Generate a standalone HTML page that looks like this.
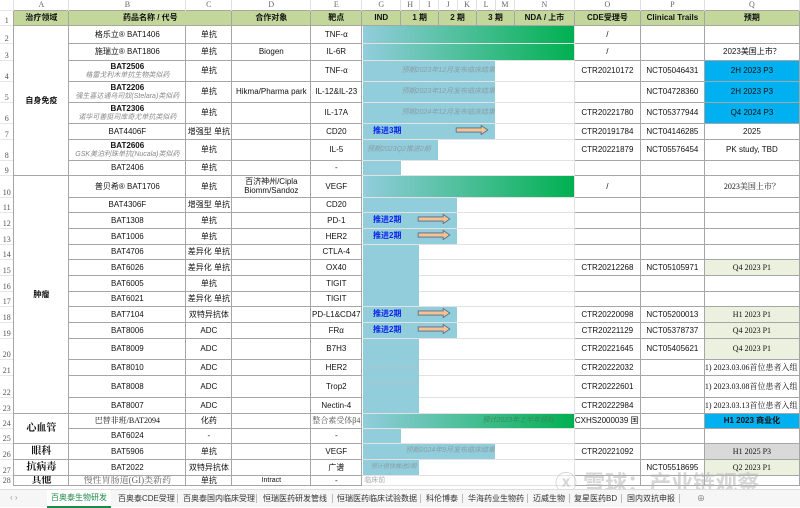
<!DOCTYPE html>
<html><head><meta charset="utf-8">
<style>
body{margin:0;width:800px;height:506px;overflow:hidden;background:#fff;font-family:"Liberation Sans","Noto Sans CJK SC",sans-serif;position:relative}
table{position:absolute;left:0;top:0;border-collapse:collapse;table-layout:fixed;font-size:8px;color:#111}
td{padding:0;border:1px solid #a6a6a6;text-align:center;vertical-align:middle;overflow:hidden;white-space:nowrap;line-height:9px}
tr.L td{border:none;border-right:1px solid #e0e0e0;color:#666;font-family:"Liberation Serif",serif;font-size:8px;background:#fff}
td.n{border:none;border-top:1px solid #e6e6e6;color:#555;font-family:"Liberation Serif",serif;font-size:8px;vertical-align:bottom}
td.g{border:none;border-right:1px solid #e2e2e2;border-bottom:1px solid #e2e2e2}
tr.H td{background:#c4d79b;font-weight:bold;font-size:8px}
.bold{font-weight:bold}
.sub{color:#888;font-style:italic;font-size:7px;display:block}
.q1{background:#00b0f0}
.q2{background:#ebf1de;font-family:"Liberation Serif","Noto Serif CJK SC",serif}
.q3{background:#d9d9d9;font-family:"Liberation Serif","Noto Serif CJK SC",serif}
.ser{font-family:"Liberation Serif","Noto Serif CJK SC",serif}
.bar{position:absolute;left:363px;background:#92cddc;font-size:7px;color:#8a9ea5;font-style:italic;white-space:nowrap;overflow:hidden;line-height:14px}
.grad{background:linear-gradient(90deg,#92cddc,#00b050)}
.blue{color:#0b24f0;font-style:normal;font-weight:bold;font-size:8px;padding-left:10px}
.arr{position:absolute;width:40px;height:10px}
.tabs{position:absolute;left:0;top:489px;width:800px;height:17px;background:#f6f6f6;border-top:1px solid #ddd;font-size:8px;color:#333}
.tabs span{position:absolute;top:3px;white-space:nowrap}
.tabs i{position:absolute;top:4px;width:1px;height:9px;background:#bbb}
</style></head><body>
<table>
<colgroup><col style="width:14px"><col style="width:55px"><col style="width:117px"><col style="width:46px"><col style="width:79px"><col style="width:51px"><col style="width:39px"><col style="width:19px"><col style="width:19px"><col style="width:19px"><col style="width:19px"><col style="width:19px"><col style="width:19px"><col style="width:60px"><col style="width:66px"><col style="width:64px"><col style="width:95px"></colgroup>
<tr class="L" style="height:10px"><td></td><td>A</td><td>B</td><td>C</td><td>D</td><td>E</td><td>G</td><td>H</td><td>I</td><td>J</td><td>K</td><td>L</td><td>M</td><td>N</td><td>O</td><td>P</td><td>Q</td></tr>
<tr class="H" style="height:15px"><td class="n" style="background:#fff;font-weight:normal">1</td><td>治疗领域</td><td colspan="2">药品名称 / 代号</td><td>合作对象</td><td>靶点</td><td>IND</td><td colspan="2">1 期</td><td colspan="2">2 期</td><td colspan="2">3 期</td><td>NDA / 上市</td><td>CDE受理号</td><td>Clinical Trails</td><td>预期</td></tr>
<tr style="height:18px"><td class="n">2</td><td rowspan="8" class="bold">自身免疫</td><td>格乐立® BAT1406</td><td>单抗</td><td></td><td>TNF-α</td><td class="g" colspan="8"></td><td>/</td><td></td><td></td></tr>
<tr style="height:17px"><td class="n">3</td><td>施瑞立® BAT1806</td><td>单抗</td><td>Biogen</td><td>IL-6R</td><td class="g" colspan="8"></td><td>/</td><td></td><td>2023美国上市？</td></tr>
<tr style="height:21px"><td class="n">4</td><td><b>BAT2506</b><span class="sub">格雷戈利木单抗生物类似药</span></td><td>单抗</td><td></td><td>TNF-α</td><td class="g" colspan="8"></td><td>CTR20210172</td><td>NCT05046431</td><td class="q1">2H 2023 P3</td></tr>
<tr style="height:21px"><td class="n">5</td><td><b>BAT2206</b><span class="sub">强生喜达通乌司奴(Stelara)类似药</span></td><td>单抗</td><td>Hikma/Pharma park</td><td>IL-12&amp;IL-23</td><td class="g" colspan="8"></td><td></td><td>NCT04728360</td><td class="q1">2H 2023 P3</td></tr>
<tr style="height:21px"><td class="n">6</td><td><b>BAT2306</b><span class="sub">诺华可善挺司库奇尤单抗类似药</span></td><td>单抗</td><td></td><td>IL-17A</td><td class="g" colspan="8"></td><td>CTR20221780</td><td>NCT05377944</td><td class="q1">Q4 2024 P3</td></tr>
<tr style="height:16px"><td class="n">7</td><td>BAT4406F</td><td>增强型 单抗</td><td></td><td>CD20</td><td class="g" colspan="8"></td><td>CTR20191784</td><td>NCT04146285</td><td>2025</td></tr>
<tr style="height:21px"><td class="n">8</td><td><b>BAT2606</b><span class="sub">GSK美泊利珠单抗(Nucala)类似药</span></td><td>单抗</td><td></td><td>IL-5</td><td class="g" colspan="8"></td><td>CTR20221879</td><td>NCT05576454</td><td>PK study, TBD</td></tr>
<tr style="height:15px"><td class="n">9</td><td>BAT2406</td><td>单抗</td><td></td><td>-</td><td class="g" colspan="8"></td><td></td><td></td><td></td></tr>
<tr style="height:22px"><td class="n">10</td><td rowspan="14" class="bold">肿瘤</td><td>普贝希® BAT1706</td><td>单抗</td><td>百济神州/Cipla<br>Biomm/Sandoz</td><td>VEGF</td><td class="g" colspan="8"></td><td>/</td><td></td><td class="ser">2023美国上市？</td></tr>
<tr style="height:15px"><td class="n">11</td><td>BAT4306F</td><td>增强型 单抗</td><td></td><td>CD20</td><td class="g" colspan="8"></td><td></td><td></td><td></td></tr>
<tr style="height:16px"><td class="n">12</td><td>BAT1308</td><td>单抗</td><td></td><td>PD-1</td><td class="g" colspan="8"></td><td></td><td></td><td></td></tr>
<tr style="height:16px"><td class="n">13</td><td>BAT1006</td><td>单抗</td><td></td><td>HER2</td><td class="g" colspan="8"></td><td></td><td></td><td></td></tr>
<tr style="height:15px"><td class="n">14</td><td>BAT4706</td><td>差异化 单抗</td><td></td><td>CTLA-4</td><td class="g" colspan="8"></td><td></td><td></td><td></td></tr>
<tr style="height:16px"><td class="n">15</td><td>BAT6026</td><td>差异化 单抗</td><td></td><td>OX40</td><td class="g" colspan="8"></td><td>CTR20212268</td><td>NCT05105971</td><td class="q2">Q4 2023 P1</td></tr>
<tr style="height:16px"><td class="n">16</td><td>BAT6005</td><td>单抗</td><td></td><td>TIGIT</td><td class="g" colspan="8"></td><td></td><td></td><td></td></tr>
<tr style="height:15px"><td class="n">17</td><td>BAT6021</td><td>差异化 单抗</td><td></td><td>TIGIT</td><td class="g" colspan="8"></td><td></td><td></td><td></td></tr>
<tr style="height:16px"><td class="n">18</td><td>BAT7104</td><td>双特异抗体</td><td></td><td>PD-L1&amp;CD47</td><td class="g" colspan="8"></td><td>CTR20220098</td><td>NCT05200013</td><td class="q2">H1 2023 P1</td></tr>
<tr style="height:16px"><td class="n">19</td><td>BAT8006</td><td>ADC</td><td></td><td>FRα</td><td class="g" colspan="8"></td><td>CTR20221129</td><td>NCT05378737</td><td class="q2">Q4 2023 P1</td></tr>
<tr style="height:21px"><td class="n">20</td><td>BAT8009</td><td>ADC</td><td></td><td>B7H3</td><td class="g" colspan="8"></td><td>CTR20221645</td><td>NCT05405621</td><td class="q2">Q4 2023 P1</td></tr>
<tr style="height:16px"><td class="n">21</td><td>BAT8010</td><td>ADC</td><td></td><td>HER2</td><td class="g" colspan="8"></td><td>CTR20222032</td><td></td><td class="ser" style="text-align:left">1) 2023.03.06首位患者入组</td></tr>
<tr style="height:22px"><td class="n">22</td><td>BAT8008</td><td>ADC</td><td></td><td>Trop2</td><td class="g" colspan="8"></td><td>CTR20222601</td><td></td><td class="ser" style="text-align:left">1) 2023.03.08首位患者入组</td></tr>
<tr style="height:16px"><td class="n">23</td><td>BAT8007</td><td>ADC</td><td></td><td>Nectin-4</td><td class="g" colspan="8"></td><td>CTR20222984</td><td></td><td class="ser" style="text-align:left">1) 2023.03.13首位患者入组</td></tr>
<tr style="height:15px"><td class="n">24</td><td rowspan="2" class="bold ser" style="font-size:10px">心血管</td><td class="ser">巴替非班/BAT2094</td><td>化药</td><td></td><td class="ser" style="color:#555">整合素受体β4</td><td class="g" colspan="8"></td><td style="text-align:left">CXHS2000039 国</td><td></td><td class="q1 bold">H1 2023 商业化</td></tr>
<tr style="height:15px"><td class="n">25</td><td>BAT6024</td><td>-</td><td></td><td>-</td><td class="g" colspan="8"></td><td></td><td></td><td></td></tr>
<tr style="height:16px"><td class="n">26</td><td class="bold ser" style="font-size:10px">眼科</td><td>BAT5906</td><td>单抗</td><td></td><td>VEGF</td><td class="g" colspan="8"></td><td>CTR20221092</td><td></td><td class="q3">H1 2025 P3</td></tr>
<tr style="height:16px"><td class="n">27</td><td class="bold ser" style="font-size:10px">抗病毒</td><td>BAT2022</td><td>双特异抗体</td><td></td><td>广谱</td><td class="g" colspan="8"></td><td></td><td>NCT05518695</td><td class="q2">Q2 2023 P1</td></tr>
<tr style="height:10px"><td class="n">28</td><td class="bold ser" style="font-size:10px">其他</td><td class="ser" style="color:#666;font-size:9px">慢性胃肠道(GI)类新药</td><td>单抗</td><td style="font-size:7px">Intract</td><td>-</td><td class="g" colspan="8" style="text-align:left;color:#aaa;font-size:7px">&nbsp;临床前</td><td></td><td></td><td></td></tr>
</table>

<div class="bar grad" style="top:26px;height:17px;width:211px"></div>
<div class="bar grad" style="top:44px;height:16px;width:211px"></div>
<div class="bar" style="top:61px;height:20px;width:132px;line-height:20px;text-align:right">预期2023年12月发布临床结果</div>
<div class="bar" style="top:82px;height:20px;width:132px;line-height:20px;text-align:right">预期2023年12月发布临床结果</div>
<div class="bar" style="top:103px;height:20px;width:132px;line-height:20px;text-align:right">预期2024年12月发布临床结果</div>
<div class="bar" style="top:124px;height:15px;width:132px"><span class="blue">推进3期</span></div>
<div class="bar" style="top:140px;height:20px;width:75px;line-height:20px;padding-left:4px;box-sizing:border-box">预期2023Q2推进2期</div>
<div class="bar" style="top:161px;height:14px;width:38px"></div>
<div class="bar grad" style="top:176px;height:21px;width:211px"></div>
<div class="bar" style="top:198px;height:14px;width:94px"></div>
<div class="bar" style="top:213px;height:15px;width:94px"><span class="blue">推进2期</span></div>
<div class="bar" style="top:229px;height:15px;width:94px"><span class="blue">推进2期</span></div>
<div class="bar" style="top:245px;height:61px;width:56px"></div>
<div class="bar" style="top:307px;height:15px;width:94px"><span class="blue">推进2期</span></div>
<div class="bar" style="top:323px;height:15px;width:94px"><span class="blue">推进2期</span></div>
<div class="bar" style="top:339px;height:74px;width:56px"></div>
<div class="bar" style="top:360px;height:15px;width:56px;color:#b0c4ca;font-family:'Liberation Serif',serif">Clinical trial started</div>
<div class="bar" style="top:376px;height:21px;width:56px;color:#b0c4ca;font-family:'Liberation Serif',serif">Clinical trial started</div>
<div class="bar grad" style="top:414px;height:14px;width:211px;text-align:right;color:#3a8a5a;padding-right:20px;box-sizing:border-box">预计2023年上半年获批</div>
<div class="bar" style="top:429px;height:14px;width:38px"></div>
<div class="bar" style="top:444px;height:15px;width:132px;text-align:right">预期2024年9月发布临床结果</div>
<div class="bar" style="top:460px;height:15px;width:56px;padding-left:8px;box-sizing:border-box;font-size:6px">预计很快推进2期</div>

<svg class="arr" style="left:452px;top:125px" viewBox="0 0 40 12"><path d="M1 3.5H31V0.5L39 6L31 11.5V8.5H1Z" fill="#fac090" stroke="#4a6e8e" stroke-width="1"/></svg>
<svg class="arr" style="left:414px;top:214px" viewBox="0 0 40 12"><path d="M1 3.5H31V0.5L39 6L31 11.5V8.5H1Z" fill="#fac090" stroke="#4a6e8e" stroke-width="1"/></svg>
<svg class="arr" style="left:414px;top:230px" viewBox="0 0 40 12"><path d="M1 3.5H31V0.5L39 6L31 11.5V8.5H1Z" fill="#fac090" stroke="#4a6e8e" stroke-width="1"/></svg>
<svg class="arr" style="left:414px;top:308px" viewBox="0 0 40 12"><path d="M1 3.5H31V0.5L39 6L31 11.5V8.5H1Z" fill="#fac090" stroke="#4a6e8e" stroke-width="1"/></svg>
<svg class="arr" style="left:414px;top:324px" viewBox="0 0 40 12"><path d="M1 3.5H31V0.5L39 6L31 11.5V8.5H1Z" fill="#fac090" stroke="#4a6e8e" stroke-width="1"/></svg>

<div style="position:absolute;left:555px;top:466px;font-size:22px;color:rgba(180,180,180,0.55);font-weight:bold;white-space:nowrap">ⓧ 雪球：产业链观察</div>

<div class="tabs">
<span style="left:10px;color:#999">‹ ›</span>
<span style="left:47px;top:0;height:14px;padding:2px 4px 0;background:#fff;color:#1e8a4a;border-bottom:2px solid #1e8a4a">百奥泰生物研发</span>
<span style="left:118px">百奥泰CDE受理</span><i style="left:177px"></i>
<span style="left:183px">百奥泰国内临床受理</span><i style="left:256px"></i>
<span style="left:263px">恒瑞医药研发管线</span><i style="left:332px"></i>
<span style="left:337px">恒瑞医药临床试验数据</span><i style="left:420px"></i>
<span style="left:426px">科伦博泰</span><i style="left:462px"></i>
<span style="left:468px">华海药业生物药</span><i style="left:527px"></i>
<span style="left:533px">迈威生物</span><i style="left:569px"></i>
<span style="left:574px">复星医药BD</span><i style="left:621px"></i>
<span style="left:627px">国内双抗申报</span><i style="left:679px"></i>
<span style="left:697px;color:#777">⊕</span>
</div>
</body></html>
